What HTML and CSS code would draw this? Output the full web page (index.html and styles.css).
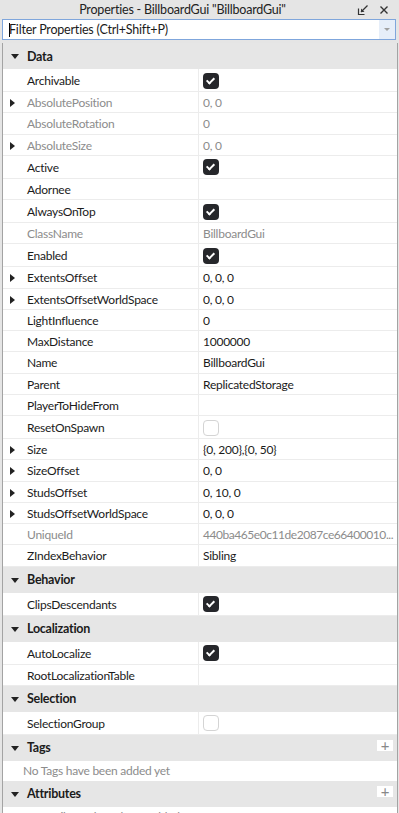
FILE: index.html
```html
<!DOCTYPE html>
<html lang="en">
<head>
    <meta charset="UTF-8">
    <meta name="viewport" content="width=device-width, initial-scale=1.0">
    <title>Properties - BillboardGui</title>
    <link rel="stylesheet" href="styles.css">
</head>
<body>
    <div class="titlebar">
        <div class="title">Properties - BillboardGui "BillboardGui"</div>
        <div class="title-icons">
            <svg width="12" height="12" viewBox="0 0 12 12">
                <path d="M1.5 4.5 V10.5 H7.5" fill="none" stroke="#333" stroke-width="1.2"/>
                <path d="M4 8 L10.5 1.5" stroke="#333" stroke-width="1.3"/>
                <path d="M4 4.5 V8 H7.5 Z" fill="#333"/>
            </svg>
            <svg width="10" height="10" viewBox="0 0 10 10">
                <path d="M1.5 1.5 L8.5 8.5 M8.5 1.5 L1.5 8.5" stroke="#333" stroke-width="1.4"/>
            </svg>
        </div>
    </div>

    <div class="filter">
        <div class="filter-text"><span class="caret"></span>Filter Properties (Ctrl+Shift+P)</div>
        <div class="filter-drop"><span class="drop-arrow"></span></div>
    </div>

    <div class="panel">
        <div class="section"><span class="tri-down"></span>Data</div>
        <div class="row tall"><div class="name">Archivable</div><div class="value"><span class="check on"></span></div></div>
        <div class="row"><div class="name ro"><span class="tri-right"></span>AbsolutePosition</div><div class="value ro">0, 0</div></div>
        <div class="row"><div class="name ro">AbsoluteRotation</div><div class="value ro">0</div></div>
        <div class="row"><div class="name ro"><span class="tri-right"></span>AbsoluteSize</div><div class="value ro">0, 0</div></div>
        <div class="row tall"><div class="name">Active</div><div class="value"><span class="check on"></span></div></div>
        <div class="row"><div class="name">Adornee</div><div class="value"></div></div>
        <div class="row tall"><div class="name">AlwaysOnTop</div><div class="value"><span class="check on"></span></div></div>
        <div class="row"><div class="name ro">ClassName</div><div class="value ro">BillboardGui</div></div>
        <div class="row tall"><div class="name">Enabled</div><div class="value"><span class="check on"></span></div></div>
        <div class="row"><div class="name"><span class="tri-right"></span>ExtentsOffset</div><div class="value">0, 0, 0</div></div>
        <div class="row"><div class="name"><span class="tri-right"></span>ExtentsOffsetWorldSpace</div><div class="value">0, 0, 0</div></div>
        <div class="row"><div class="name">LightInfluence</div><div class="value">0</div></div>
        <div class="row"><div class="name">MaxDistance</div><div class="value">1000000</div></div>
        <div class="row"><div class="name">Name</div><div class="value">BillboardGui</div></div>
        <div class="row"><div class="name">Parent</div><div class="value">ReplicatedStorage</div></div>
        <div class="row"><div class="name">PlayerToHideFrom</div><div class="value"></div></div>
        <div class="row tall"><div class="name">ResetOnSpawn</div><div class="value"><span class="check"></span></div></div>
        <div class="row"><div class="name"><span class="tri-right"></span>Size</div><div class="value">{0, 200},{0, 50}</div></div>
        <div class="row"><div class="name"><span class="tri-right"></span>SizeOffset</div><div class="value">0, 0</div></div>
        <div class="row"><div class="name"><span class="tri-right"></span>StudsOffset</div><div class="value">0, 10, 0</div></div>
        <div class="row"><div class="name"><span class="tri-right"></span>StudsOffsetWorldSpace</div><div class="value">0, 0, 0</div></div>
        <div class="row"><div class="name ro">UniqueId</div><div class="value ro"><span class="uid">440ba465e0c11de2087ce66400010...</span></div></div>
        <div class="row"><div class="name">ZIndexBehavior</div><div class="value">Sibling</div></div>

        <div class="section"><span class="tri-down"></span>Behavior</div>
        <div class="row tall"><div class="name">ClipsDescendants</div><div class="value"><span class="check on"></span></div></div>

        <div class="section"><span class="tri-down"></span>Localization</div>
        <div class="row tall"><div class="name">AutoLocalize</div><div class="value"><span class="check on"></span></div></div>
        <div class="row"><div class="name">RootLocalizationTable</div><div class="value"></div></div>

        <div class="section"><span class="tri-down"></span>Selection</div>
        <div class="row tall"><div class="name">SelectionGroup</div><div class="value"><span class="check"></span></div></div>

        <div class="section"><span class="tri-down"></span>Tags<span class="add">+</span></div>
        <div class="empty">No Tags have been added yet</div>

        <div class="section"><span class="tri-down"></span>Attributes<span class="add">+</span></div>
        <div class="empty">No Attributes have been added yet</div>
    </div>
</body>
</html>
```

FILE: styles.css
```css
html, body {
    margin: 0;
    padding: 0;
    height: 100%;
    overflow: hidden;
}
body {
    background-color: #e5e5e5;
    font-family: Lato, "Noto Sans", sans-serif;
    font-size: 12px;
    letter-spacing: -0.25px;
    color: #1b1b1b;
}
.titlebar {
    height: 19px;
    display: flex;
    align-items: center;
}
.title {
    flex: 1;
    text-align: center;
    padding-left: 8px;
    font-size: 12.5px;
    letter-spacing: -0.2px;
    color: #222;
}
.title-icons {
    display: flex;
    align-items: center;
    gap: 10px;
    padding-right: 10px;
}
.filter {
    margin: 0 3px 0 2px;
    height: 19px;
    border: 1px solid #7fa6dc;
    background: white;
    display: flex;
}
.filter-text {
    flex: 1;
    padding-left: 6px;
    line-height: 19px;
    font-size: 12.5px;
    letter-spacing: -0.2px;
    position: relative;
}
.caret {
    position: absolute;
    left: 6px;
    top: 3px;
    width: 1px;
    height: 14px;
    background: #000;
}
.filter-drop {
    width: 16px;
    background: #e6eef9;
    display: flex;
    align-items: center;
    justify-content: center;
}
.drop-arrow {
    width: 0;
    height: 0;
    border-left: 3px solid transparent;
    border-right: 3px solid transparent;
    border-top: 3px solid #a0a0a0;
}
.panel {
    margin: 3px 1px 0 2px;
    border-left: 1px solid #a3a3a3;
    border-right: 1px solid #a3a3a3;
    background: white;
    height: 800px;
}
.section {
    height: 26px;
    background: #e6e6e6;
    display: flex;
    align-items: center;
    padding-left: 24px;
    font-weight: bold;
    font-size: 12.5px;
    position: relative;
}
.tri-down {
    position: absolute;
    left: 8px;
    top: 11px;
    width: 0;
    height: 0;
    border-left: 4px solid transparent;
    border-right: 4px solid transparent;
    border-top: 5px solid #222;
}
.add {
    position: absolute;
    right: 4px;
    top: 5px;
    width: 16px;
    height: 11px;
    background: white;
    color: #888;
    font-weight: normal;
    font-size: 15px;
    line-height: 11px;
    text-align: center;
}
.row {
    display: grid;
    grid-template-columns: 196px 1fr;
    height: 21.25px;
    border-bottom: 1px solid #ececec;
    box-sizing: border-box;
}
.row.tall {
    height: 23px;
}
.name {
    position: relative;
    padding-left: 24px;
    padding-top: 1px;
    display: flex;
    align-items: center;
    border-right: 1px solid #ececec;
    white-space: nowrap;
}
.value {
    padding-left: 4px;
    padding-right: 6px;
    padding-top: 1px;
    display: flex;
    align-items: center;
    white-space: nowrap;
    overflow: hidden;
}
.uid {
    letter-spacing: -0.45px;
}
.ro {
    color: #8c8c8c;
}
.tri-right {
    position: absolute;
    left: 7px;
    top: 7px;
    width: 0;
    height: 0;
    border-top: 4px solid transparent;
    border-bottom: 4px solid transparent;
    border-left: 5px solid #222;
}
.check {
    width: 16px;
    height: 16px;
    box-sizing: border-box;
    border: 1px solid #d4d4d4;
    border-radius: 4px;
    background: white;
}
.check.on {
    border: none;
    background: #26272b;
    position: relative;
}
.check.on::after {
    content: "";
    position: absolute;
    left: 5px;
    top: 3px;
    width: 3px;
    height: 6px;
    border-right: 2px solid white;
    border-bottom: 2px solid white;
    transform: rotate(45deg);
}
.empty {
    height: 20px;
    line-height: 20px;
    padding-left: 20px;
    color: #8c8c8c;
}
```
